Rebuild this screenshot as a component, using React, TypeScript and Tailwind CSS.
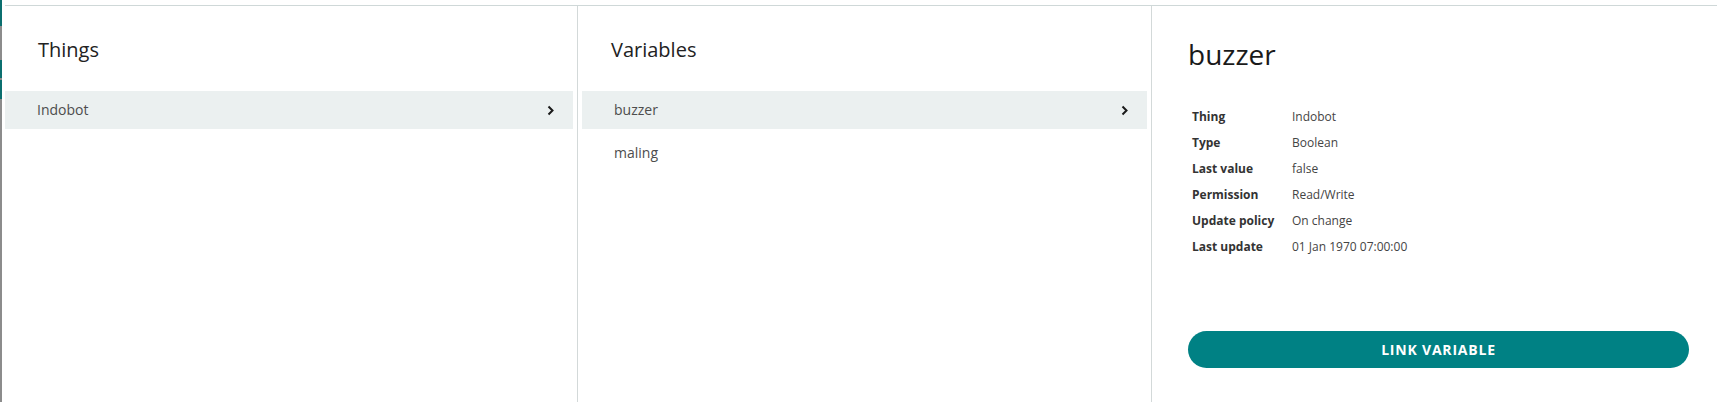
import React from 'react';

interface ListItem {
  id: string;
  label: string;
}

const things: ListItem[] = [{ id: 'indobot', label: 'Indobot' }];

const variables: ListItem[] = [
  { id: 'buzzer', label: 'buzzer' },
  { id: 'maling', label: 'maling' },
];

const details: [string, string][] = [
  ['Thing', 'Indobot'],
  ['Type', 'Boolean'],
  ['Last value', 'false'],
  ['Permission', 'Read/Write'],
  ['Update policy', 'On change'],
  ['Last update', '01 Jan 1970 07:00:00'],
];

const Chevron: React.FC = () => (
  <svg width="7" height="11" viewBox="0 0 7 11" fill="none">
    <polyline points="1.5,1.5 5.5,5.5 1.5,9.5" stroke="#1a1a1a" strokeWidth="2" />
  </svg>
);

const ListRow: React.FC<{ item: ListItem; selected: boolean }> = ({ item, selected }) => (
  <li
    className={`flex h-[38px] items-center justify-between pl-[32px] pr-[19px] text-[14px] leading-[38px] text-[#4d4d4d] ${
      selected ? 'bg-[#ebf0f0]' : ''
    }`}
  >
    <span>{item.label}</span>
    {selected && <Chevron />}
  </li>
);

const App: React.FC = () => {
  const selectedThing = 'indobot';
  const selectedVariable = 'buzzer';

  return (
    <div className="flex h-[402px] w-full bg-white" style={{ fontFamily: '"Open Sans", Arial, sans-serif' }}>
      {/* sidebar edge */}
      <div className="flex w-[2px] flex-col bg-[#8c8c8c]">
        <div className="h-[26px] bg-[#0b6f6f]" />
        <div className="h-[34px]" />
        <div className="h-[18px] bg-[#0b6f6f]" />
        <div className="h-[2px]" />
        <div className="h-[19px] bg-[#0b6f6f]" />
      </div>

      <div className="flex flex-1 flex-col pl-[3px] pt-[5px]">
        <div className="flex flex-1 border-t border-[#cfd8d8]">
          {/* Things */}
          <section className="w-[573px] border-r border-[#d3d9d9] pr-[4px]">
            <h2 className="pl-[33px] pt-[30px] text-[20px] leading-[28px] text-[#222]">Things</h2>
            <ul className="mt-[27px] flex flex-col gap-[5px]">
              {things.map(t => (
                <ListRow key={t.id} item={t} selected={t.id === selectedThing} />
              ))}
            </ul>
          </section>

          {/* Variables */}
          <section className="w-[574px] border-r border-[#d3d9d9] px-[4px]">
            <h2 className="pl-[29px] pt-[30px] text-[20px] leading-[28px] text-[#222]">Variables</h2>
            <ul className="mt-[27px] flex flex-col gap-[5px]">
              {variables.map(v => (
                <ListRow key={v.id} item={v} selected={v.id === selectedVariable} />
              ))}
            </ul>
          </section>

          {/* Detail */}
          <section className="flex flex-1 flex-col pl-[36px] pr-[28px]">
            <h1 className="pt-[30px] text-[28px] leading-[36px] text-[#1a1a1a]">buzzer</h1>
            <dl className="ml-[4px] mt-[32px] grid grid-cols-[100px_1fr] text-[12px] leading-[26px]">
              {details.map(([label, value]) => (
                <React.Fragment key={label}>
                  <dt className="font-bold text-[#333]">{label}</dt>
                  <dd className="text-[#444]">{value}</dd>
                </React.Fragment>
              ))}
            </dl>
            <button className="mt-[71px] h-[37px] w-full rounded-full bg-[#008184] text-[14px] font-bold tracking-[0.8px] text-white">
              LINK VARIABLE
            </button>
          </section>
        </div>
      </div>
    </div>
  );
};

export default App;
